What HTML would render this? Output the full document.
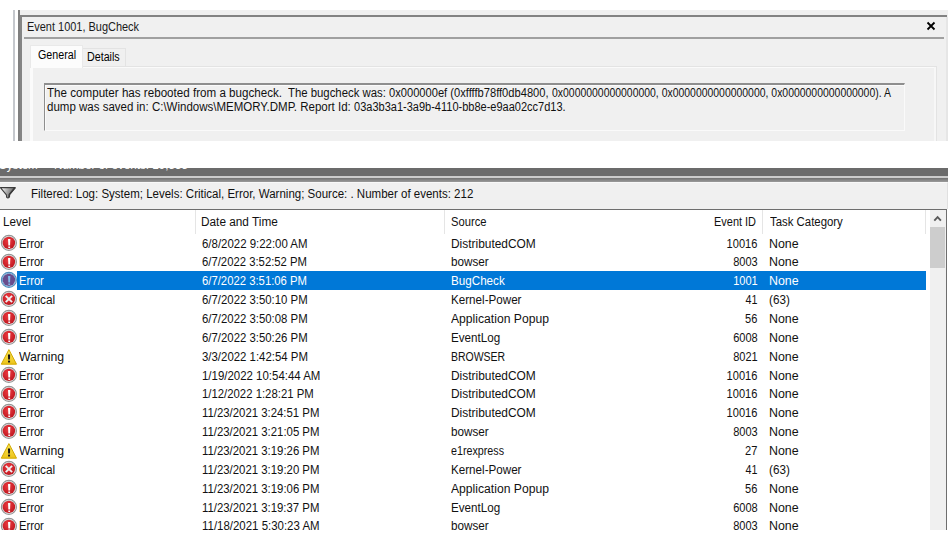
<!DOCTYPE html>
<html><head><meta charset="utf-8"><style>
*{margin:0;padding:0;box-sizing:border-box}
html,body{width:950px;height:550px;overflow:hidden;background:#fff;font-family:"Liberation Sans",sans-serif;font-size:12px;color:#000}
.a{position:absolute}
.t{position:absolute;white-space:pre}
#dlg{left:20px;top:10px;width:928px;height:131px;background:#f0f0f0}
#lgl{left:13px;top:10px;width:2px;height:131px;background:#c5c8cd}
#dgl{left:18px;top:10px;width:2px;height:131px;background:#7f7f7f}
#dgl2{left:20px;top:15px;width:2px;height:126px;background:#858585}
#tline{left:20px;top:15px;width:927px;height:2px;background:#838383}
#tline2{left:24px;top:37px;width:920px;height:1.5px;background:#a0a0a0}
#rline{left:946px;top:17px;width:2px;height:124px;background:#e6e6e6}
#close{left:926px;top:21px}
#tab1{left:29.5px;top:45px;width:53px;height:23px;background:#fcfcfc;border:1px solid #e9e9e9;border-bottom:none}
#tab2{left:82.5px;top:47.5px;width:43px;height:19px;background:#f0f0f0;border:1px solid #e3e3e3;border-left:none}
#panel{left:29.5px;top:66px;width:907.8px;height:75px;background:#f0f0f0;border-top:1px solid #e3e3e3;border-right:1.5px solid #e3e3e3}
#pl{left:29.5px;top:67px;width:3.2px;height:74px;background:#fbfbfb}
#pt{left:29.5px;top:67px;width:906.3px;height:1px;background:#fafafa}
#pr{left:934px;top:67px;width:1.8px;height:74px;background:#f7f7f7}
#tbox{left:44px;top:82.8px;width:861px;height:48px;background:#f0f0f0;border-top:2px solid #8e8e8e;border-left:1.8px solid #8e8e8e;border-right:1px solid #fafafa;border-bottom:1px solid #fafafa;box-shadow:inset 1px 1px 0 #fafafa}
#dbar{left:0;top:168px;width:948px;height:8px;background:#6b6b6b;overflow:hidden}
#st1{left:0;top:176px;width:948px;height:2px;background:#cbcbcb}
#st2{left:0;top:178px;width:948px;height:3.5px;background:linear-gradient(#727272,#9a9a9a)}
#fbar{left:0;top:181.5px;width:947.5px;height:27.5px;background:#f0f0f0;border-top:1px solid #f8f8f8;border-right:1px solid #e0e0e0}
#funnel{left:0;top:186px}
#tborder{left:0;top:209px;width:947px;height:1px;background:#6e6e6e}
#rborder{left:945.6px;top:209px;width:1.6px;height:321px;background:#6e6e6e}
#list{left:0;top:210px;width:945.6px;height:320px;background:#fff;overflow:hidden}
.vd{top:0;width:1px;height:23.5px;background:#e5e5e5}
.row{position:absolute;left:0;width:926px;height:18.857px}
.row .ic{position:absolute;left:0;top:0.5px}
.row .hl{position:absolute;left:17px;top:0;width:909px;height:100%}
.row.sel .hl{background:#0078d7}
#sb{left:930px;top:0;width:15.6px;height:320px;background:#f0f0f0}
#thumb{left:930px;top:16.6px;width:15px;height:41.6px;background:#cdcdcd}
</style></head><body>
<svg width="0" height="0" style="position:absolute"><defs><radialGradient id="rg" cx="0.45" cy="0.35" r="0.75"><stop offset="0" stop-color="#ee3a40"/><stop offset="1" stop-color="#b5121a"/></radialGradient><linearGradient id="yg" x1="0" y1="0" x2="0" y2="1"><stop offset="0" stop-color="#fbe95a"/><stop offset="1" stop-color="#ecc31a"/></linearGradient></defs></svg>
<div class="a" id="lgl"></div>
<div class="a" id="dlg"></div>
<div class="a" id="dgl"></div>
<div class="a" id="dgl2"></div>
<div class="a" id="tline"></div>
<div class="a" id="rline"></div>
<span class="t" style="left:26.96px;top:20.44px;font-size:13px;line-height:13px;transform:scaleX(0.8424);transform-origin:0 0;color:#1a1a1a;">Event 1001, BugCheck</span>
<svg class="a" id="close" width="10" height="10" viewBox="0 0 10 10"><path d="M1.5 1.5 L8.5 8.5 M8.5 1.5 L1.5 8.5" stroke="#000" stroke-width="1.8"/></svg>
<div class="a" id="tline2"></div>
<div class="a" id="panel"></div><div class="a" id="pl"></div><div class="a" id="pt"></div><div class="a" id="pr"></div>
<div class="a" id="tab2"></div>
<div class="a" id="tab1"></div>
<span class="t" style="left:37.60px;top:48.60px;font-size:12px;line-height:12px;transform:scaleX(0.8905);transform-origin:0 0;color:#000;">General</span>
<span class="t" style="left:87.11px;top:51.30px;font-size:12px;line-height:12px;transform:scaleX(0.8917);transform-origin:0 0;color:#000;">Details</span>
<div class="a" id="tbox"></div>
<span class="t" style="left:47.00px;top:86.50px;font-size:12px;line-height:12px;transform:scaleX(0.9682);transform-origin:0 0;color:#111;">The computer has rebooted from a bugcheck.</span><span class="t" style="left:287.90px;top:86.50px;font-size:12px;line-height:12px;transform:scaleX(0.9461);transform-origin:0 0;color:#111;">The bugcheck was:</span><span class="t" style="left:388.80px;top:86.50px;font-size:12px;line-height:12px;transform:scaleX(0.9281);transform-origin:0 0;color:#111;">0x000000ef (0xffffb78ff0db4800,</span><span class="t" style="left:551.60px;top:86.50px;font-size:12px;line-height:12px;transform:scaleX(0.8695);transform-origin:0 0;color:#111;">0x0000000000000000, 0x0000000000000000, 0x0000000000000000). A</span>
<span class="t" style="left:47.00px;top:100.80px;font-size:12px;line-height:12px;transform:scaleX(0.9589);transform-origin:0 0;color:#111;">dump was saved in: C:\Windows\MEMORY.DMP. Report Id:</span><span class="t" style="left:354.20px;top:100.80px;font-size:12px;line-height:12px;transform:scaleX(0.9178);transform-origin:0 0;color:#111;">03a3b3a1-3a9b-4110-bb8e-e9aa02cc7d13.</span>
<div class="a" id="dbar"><span class="t" style="left:-1.50px;top:-9.40px;font-size:12px;line-height:12px;transform:scaleX(0.9700);transform-origin:0 0;color:#fff;">System     Number of events: 19,535</span></div>
<div class="a" id="st1"></div>
<div class="a" id="st2"></div>
<div class="a" id="fbar"></div>
<svg class="a" id="funnel" width="17" height="15" viewBox="0 0 17 15"><defs><linearGradient id="fg" x1="0" x2="1" y1="0" y2="0.3"><stop offset="0.1" stop-color="#f4f4f4"/><stop offset="0.8" stop-color="#7a7a7a"/></linearGradient></defs><path d="M0.4 1.6 L15.2 1.6 L9.4 8.6 L9.2 11.2 Q7.9 12.6 6.6 11.2 L6.4 8.9 Z" fill="url(#fg)" stroke="#3c3c3c" stroke-width="1.05" stroke-linejoin="round"/><path d="M15.2 1.6 L9.4 8.6 L9.2 11.2" fill="none" stroke="#3a3a3a" stroke-width="1.6" stroke-linejoin="round"/></svg>
<span class="t" style="left:30.54px;top:187.60px;font-size:12px;line-height:12px;transform:scaleX(0.9593);transform-origin:0 0;color:#111;">Filtered: Log: System; Levels: Critical, Error, Warning; Source: . Number of events: 212</span>
<div class="a" id="tborder"></div>
<div class="a" id="list">
<div class="a vd" style="left:195px"></div>
<div class="a vd" style="left:444px"></div>
<div class="a vd" style="left:762px"></div>
<div class="a vd" style="left:925px"></div>
<div class="a" style="left:0;top:-210px;width:950px;height:550px"><span class="t" style="left:2.73px;top:215.60px;font-size:12px;line-height:12px;transform:scaleX(0.9741);transform-origin:0 0;color:#111;">Level</span><span class="t" style="left:201.22px;top:215.60px;font-size:12px;line-height:12px;transform:scaleX(0.9844);transform-origin:0 0;color:#111;">Date and Time</span><span class="t" style="left:450.57px;top:215.60px;font-size:12px;line-height:12px;transform:scaleX(0.9324);transform-origin:0 0;color:#111;">Source</span><span class="t" style="left:713.99px;top:215.60px;font-size:12px;line-height:12px;transform:scaleX(0.9133);transform-origin:0 0;color:#111;">Event ID</span><span class="t" style="left:769.50px;top:215.60px;font-size:12px;line-height:12px;transform:scaleX(0.9494);transform-origin:0 0;color:#111;">Task Category</span></div>
<div class="a" style="left:0;top:23.200px;width:926px;height:330px">
<div class="row" style="top:0.000px"><svg class="ic" width="18" height="18" viewBox="0 0 18 18"><circle cx="8.9" cy="8.9" r="7.45" fill="none" stroke="#939393" stroke-width="1.2"/><circle cx="8.9" cy="8.9" r="6.55" fill="none" stroke="#c9c9c9" stroke-width="0.9"/><circle cx="8.9" cy="8.9" r="6.2" fill="url(#rg)"/><path d="M8.05 4.9 H10.35 L10.05 11.5 H8.35 Z" fill="#fff"/><rect x="8.3" y="12.5" width="1.8" height="1.5" fill="#fff"/></svg><div class="hl"></div><span class="t" style="left:19.20px;top:4.40px;font-size:12px;line-height:12px;transform:scaleX(0.9308);transform-origin:0 0;color:#111;">Error</span><span class="t" style="left:202.20px;top:4.40px;font-size:12px;line-height:12px;transform:scaleX(0.9527);transform-origin:0 0;color:#111;">6/8/2022 9:22:00 AM</span><span class="t" style="left:451.00px;top:4.40px;font-size:12px;line-height:12px;transform:scaleX(0.9929);transform-origin:0 0;color:#111;">DistributedCOM</span><span class="t" style="right:168.40px;top:4.40px;font-size:12px;line-height:12px;transform:scaleX(0.9219);transform-origin:100% 0;color:#111;">10016</span><span class="t" style="left:769.00px;top:4.40px;font-size:12px;line-height:12px;transform:scaleX(1.0333);transform-origin:0 0;color:#111;">None</span></div><div class="row" style="top:18.857px"><svg class="ic" width="18" height="18" viewBox="0 0 18 18"><circle cx="8.9" cy="8.9" r="7.45" fill="none" stroke="#939393" stroke-width="1.2"/><circle cx="8.9" cy="8.9" r="6.55" fill="none" stroke="#c9c9c9" stroke-width="0.9"/><circle cx="8.9" cy="8.9" r="6.2" fill="url(#rg)"/><path d="M8.05 4.9 H10.35 L10.05 11.5 H8.35 Z" fill="#fff"/><rect x="8.3" y="12.5" width="1.8" height="1.5" fill="#fff"/></svg><div class="hl"></div><span class="t" style="left:19.20px;top:4.40px;font-size:12px;line-height:12px;transform:scaleX(0.9308);transform-origin:0 0;color:#111;">Error</span><span class="t" style="left:202.20px;top:4.40px;font-size:12px;line-height:12px;transform:scaleX(0.9423);transform-origin:0 0;color:#111;">6/7/2022 3:52:52 PM</span><span class="t" style="left:451.00px;top:4.40px;font-size:12px;line-height:12px;transform:scaleX(0.9763);transform-origin:0 0;color:#111;">bowser</span><span class="t" style="right:168.40px;top:4.40px;font-size:12px;line-height:12px;transform:scaleX(0.9200);transform-origin:100% 0;color:#111;">8003</span><span class="t" style="left:769.00px;top:4.40px;font-size:12px;line-height:12px;transform:scaleX(1.0333);transform-origin:0 0;color:#111;">None</span></div><div class="row sel" style="top:37.714px"><svg class="ic" width="18" height="18" viewBox="0 0 18 18"><circle cx="8.9" cy="8.9" r="7.5" fill="none" stroke="#508cbb" stroke-width="1.1"/><circle cx="8.9" cy="8.9" r="6.6" fill="none" stroke="#68a4d3" stroke-width="0.9"/><circle cx="8.9" cy="8.9" r="6.2" fill="#684c8c"/><path d="M8.05 4.9 H10.35 L10.05 11.5 H8.35 Z" fill="#80bbeb"/><rect x="8.3" y="12.5" width="1.8" height="1.5" fill="#80bbeb"/></svg><div class="hl"></div><span class="t" style="left:19.20px;top:4.40px;font-size:12px;line-height:12px;transform:scaleX(0.9308);transform-origin:0 0;color:#fff;">Error</span><span class="t" style="left:202.20px;top:4.40px;font-size:12px;line-height:12px;transform:scaleX(0.9423);transform-origin:0 0;color:#fff;">6/7/2022 3:51:06 PM</span><span class="t" style="left:451.00px;top:4.40px;font-size:12px;line-height:12px;transform:scaleX(0.9704);transform-origin:0 0;color:#fff;">BugCheck</span><span class="t" style="right:168.40px;top:4.40px;font-size:12px;line-height:12px;transform:scaleX(0.9200);transform-origin:100% 0;color:#fff;">1001</span><span class="t" style="left:769.00px;top:4.40px;font-size:12px;line-height:12px;transform:scaleX(1.0333);transform-origin:0 0;color:#fff;">None</span></div><div class="row" style="top:56.571px"><svg class="ic" width="18" height="18" viewBox="0 0 18 18"><circle cx="8.9" cy="8.9" r="7.45" fill="none" stroke="#939393" stroke-width="1.2"/><circle cx="8.9" cy="8.9" r="6.55" fill="none" stroke="#c9c9c9" stroke-width="0.9"/><circle cx="8.9" cy="8.9" r="6.2" fill="url(#rg)"/><path d="M5.7 5.8 L12.1 12.2 M12.1 5.8 L5.7 12.2" stroke="#f0f0f0" stroke-width="1.9"/></svg><div class="hl"></div><span class="t" style="left:19.20px;top:4.40px;font-size:12px;line-height:12px;transform:scaleX(0.9861);transform-origin:0 0;color:#111;">Critical</span><span class="t" style="left:202.20px;top:4.40px;font-size:12px;line-height:12px;transform:scaleX(0.9480);transform-origin:0 0;color:#111;">6/7/2022 3:50:10 PM</span><span class="t" style="left:451.00px;top:4.40px;font-size:12px;line-height:12px;transform:scaleX(0.9694);transform-origin:0 0;color:#111;">Kernel-Power</span><span class="t" style="right:168.40px;top:4.40px;font-size:12px;line-height:12px;transform:scaleX(0.8923);transform-origin:100% 0;color:#111;">41</span><span class="t" style="left:769.00px;top:4.40px;font-size:12px;line-height:12px;transform:scaleX(0.9750);transform-origin:0 0;color:#111;">(63)</span></div><div class="row" style="top:75.428px"><svg class="ic" width="18" height="18" viewBox="0 0 18 18"><circle cx="8.9" cy="8.9" r="7.45" fill="none" stroke="#939393" stroke-width="1.2"/><circle cx="8.9" cy="8.9" r="6.55" fill="none" stroke="#c9c9c9" stroke-width="0.9"/><circle cx="8.9" cy="8.9" r="6.2" fill="url(#rg)"/><path d="M8.05 4.9 H10.35 L10.05 11.5 H8.35 Z" fill="#fff"/><rect x="8.3" y="12.5" width="1.8" height="1.5" fill="#fff"/></svg><div class="hl"></div><span class="t" style="left:19.20px;top:4.40px;font-size:12px;line-height:12px;transform:scaleX(0.9308);transform-origin:0 0;color:#111;">Error</span><span class="t" style="left:202.20px;top:4.40px;font-size:12px;line-height:12px;transform:scaleX(0.9480);transform-origin:0 0;color:#111;">6/7/2022 3:50:08 PM</span><span class="t" style="left:451.00px;top:4.40px;font-size:12px;line-height:12px;transform:scaleX(1.0125);transform-origin:0 0;color:#111;">Application Popup</span><span class="t" style="right:168.40px;top:4.40px;font-size:12px;line-height:12px;transform:scaleX(0.9200);transform-origin:100% 0;color:#111;">56</span><span class="t" style="left:769.00px;top:4.40px;font-size:12px;line-height:12px;transform:scaleX(1.0333);transform-origin:0 0;color:#111;">None</span></div><div class="row" style="top:94.285px"><svg class="ic" width="18" height="18" viewBox="0 0 18 18"><circle cx="8.9" cy="8.9" r="7.45" fill="none" stroke="#939393" stroke-width="1.2"/><circle cx="8.9" cy="8.9" r="6.55" fill="none" stroke="#c9c9c9" stroke-width="0.9"/><circle cx="8.9" cy="8.9" r="6.2" fill="url(#rg)"/><path d="M8.05 4.9 H10.35 L10.05 11.5 H8.35 Z" fill="#fff"/><rect x="8.3" y="12.5" width="1.8" height="1.5" fill="#fff"/></svg><div class="hl"></div><span class="t" style="left:19.20px;top:4.40px;font-size:12px;line-height:12px;transform:scaleX(0.9308);transform-origin:0 0;color:#111;">Error</span><span class="t" style="left:202.20px;top:4.40px;font-size:12px;line-height:12px;transform:scaleX(0.9480);transform-origin:0 0;color:#111;">6/7/2022 3:50:26 PM</span><span class="t" style="left:451.00px;top:4.40px;font-size:12px;line-height:12px;transform:scaleX(0.9694);transform-origin:0 0;color:#111;">EventLog</span><span class="t" style="right:168.40px;top:4.40px;font-size:12px;line-height:12px;transform:scaleX(0.9200);transform-origin:100% 0;color:#111;">6008</span><span class="t" style="left:769.00px;top:4.40px;font-size:12px;line-height:12px;transform:scaleX(1.0333);transform-origin:0 0;color:#111;">None</span></div><div class="row" style="top:113.142px"><svg class="ic" width="18" height="18" viewBox="0 0 18 18"><path d="M8.9 2.6 L16.5 17.2 L1.3 17.2 Z" fill="url(#yg)" stroke="#d2a800" stroke-width="1" stroke-linejoin="round"/><path d="M7.95 7.4 H10.15 L9.95 12.4 H8.15 Z" fill="#161616"/><rect x="8.05" y="13.6" width="2" height="1.9" fill="#161616"/></svg><div class="hl"></div><span class="t" style="left:19.20px;top:4.40px;font-size:12px;line-height:12px;transform:scaleX(1.0182);transform-origin:0 0;color:#111;">Warning</span><span class="t" style="left:202.20px;top:4.40px;font-size:12px;line-height:12px;transform:scaleX(0.9509);transform-origin:0 0;color:#111;">3/3/2022 1:42:54 PM</span><span class="t" style="left:451.00px;top:4.40px;font-size:12px;line-height:12px;transform:scaleX(0.8733);transform-origin:0 0;color:#111;">BROWSER</span><span class="t" style="right:168.40px;top:4.40px;font-size:12px;line-height:12px;transform:scaleX(0.9200);transform-origin:100% 0;color:#111;">8021</span><span class="t" style="left:769.00px;top:4.40px;font-size:12px;line-height:12px;transform:scaleX(1.0333);transform-origin:0 0;color:#111;">None</span></div><div class="row" style="top:131.999px"><svg class="ic" width="18" height="18" viewBox="0 0 18 18"><circle cx="8.9" cy="8.9" r="7.45" fill="none" stroke="#939393" stroke-width="1.2"/><circle cx="8.9" cy="8.9" r="6.55" fill="none" stroke="#c9c9c9" stroke-width="0.9"/><circle cx="8.9" cy="8.9" r="6.2" fill="url(#rg)"/><path d="M8.05 4.9 H10.35 L10.05 11.5 H8.35 Z" fill="#fff"/><rect x="8.3" y="12.5" width="1.8" height="1.5" fill="#fff"/></svg><div class="hl"></div><span class="t" style="left:19.20px;top:4.40px;font-size:12px;line-height:12px;transform:scaleX(0.9308);transform-origin:0 0;color:#111;">Error</span><span class="t" style="left:202.20px;top:4.40px;font-size:12px;line-height:12px;transform:scaleX(0.9541);transform-origin:0 0;color:#111;">1/19/2022 10:54:44 AM</span><span class="t" style="left:451.00px;top:4.40px;font-size:12px;line-height:12px;transform:scaleX(0.9929);transform-origin:0 0;color:#111;">DistributedCOM</span><span class="t" style="right:168.40px;top:4.40px;font-size:12px;line-height:12px;transform:scaleX(0.9219);transform-origin:100% 0;color:#111;">10016</span><span class="t" style="left:769.00px;top:4.40px;font-size:12px;line-height:12px;transform:scaleX(1.0333);transform-origin:0 0;color:#111;">None</span></div><div class="row" style="top:150.856px"><svg class="ic" width="18" height="18" viewBox="0 0 18 18"><circle cx="8.9" cy="8.9" r="7.45" fill="none" stroke="#939393" stroke-width="1.2"/><circle cx="8.9" cy="8.9" r="6.55" fill="none" stroke="#c9c9c9" stroke-width="0.9"/><circle cx="8.9" cy="8.9" r="6.2" fill="url(#rg)"/><path d="M8.05 4.9 H10.35 L10.05 11.5 H8.35 Z" fill="#fff"/><rect x="8.3" y="12.5" width="1.8" height="1.5" fill="#fff"/></svg><div class="hl"></div><span class="t" style="left:19.20px;top:4.40px;font-size:12px;line-height:12px;transform:scaleX(0.9308);transform-origin:0 0;color:#111;">Error</span><span class="t" style="left:202.20px;top:4.40px;font-size:12px;line-height:12px;transform:scaleX(0.9457);transform-origin:0 0;color:#111;">1/12/2022 1:28:21 PM</span><span class="t" style="left:451.00px;top:4.40px;font-size:12px;line-height:12px;transform:scaleX(0.9929);transform-origin:0 0;color:#111;">DistributedCOM</span><span class="t" style="right:168.40px;top:4.40px;font-size:12px;line-height:12px;transform:scaleX(0.9219);transform-origin:100% 0;color:#111;">10016</span><span class="t" style="left:769.00px;top:4.40px;font-size:12px;line-height:12px;transform:scaleX(1.0333);transform-origin:0 0;color:#111;">None</span></div><div class="row" style="top:169.713px"><svg class="ic" width="18" height="18" viewBox="0 0 18 18"><circle cx="8.9" cy="8.9" r="7.45" fill="none" stroke="#939393" stroke-width="1.2"/><circle cx="8.9" cy="8.9" r="6.55" fill="none" stroke="#c9c9c9" stroke-width="0.9"/><circle cx="8.9" cy="8.9" r="6.2" fill="url(#rg)"/><path d="M8.05 4.9 H10.35 L10.05 11.5 H8.35 Z" fill="#fff"/><rect x="8.3" y="12.5" width="1.8" height="1.5" fill="#fff"/></svg><div class="hl"></div><span class="t" style="left:19.20px;top:4.40px;font-size:12px;line-height:12px;transform:scaleX(0.9308);transform-origin:0 0;color:#111;">Error</span><span class="t" style="left:202.20px;top:4.40px;font-size:12px;line-height:12px;transform:scaleX(0.9475);transform-origin:0 0;color:#111;">11/23/2021 3:24:51 PM</span><span class="t" style="left:451.00px;top:4.40px;font-size:12px;line-height:12px;transform:scaleX(0.9929);transform-origin:0 0;color:#111;">DistributedCOM</span><span class="t" style="right:168.40px;top:4.40px;font-size:12px;line-height:12px;transform:scaleX(0.9219);transform-origin:100% 0;color:#111;">10016</span><span class="t" style="left:769.00px;top:4.40px;font-size:12px;line-height:12px;transform:scaleX(1.0333);transform-origin:0 0;color:#111;">None</span></div><div class="row" style="top:188.570px"><svg class="ic" width="18" height="18" viewBox="0 0 18 18"><circle cx="8.9" cy="8.9" r="7.45" fill="none" stroke="#939393" stroke-width="1.2"/><circle cx="8.9" cy="8.9" r="6.55" fill="none" stroke="#c9c9c9" stroke-width="0.9"/><circle cx="8.9" cy="8.9" r="6.2" fill="url(#rg)"/><path d="M8.05 4.9 H10.35 L10.05 11.5 H8.35 Z" fill="#fff"/><rect x="8.3" y="12.5" width="1.8" height="1.5" fill="#fff"/></svg><div class="hl"></div><span class="t" style="left:19.20px;top:4.40px;font-size:12px;line-height:12px;transform:scaleX(0.9308);transform-origin:0 0;color:#111;">Error</span><span class="t" style="left:202.20px;top:4.40px;font-size:12px;line-height:12px;transform:scaleX(0.9480);transform-origin:0 0;color:#111;">11/23/2021 3:21:05 PM</span><span class="t" style="left:451.00px;top:4.40px;font-size:12px;line-height:12px;transform:scaleX(0.9763);transform-origin:0 0;color:#111;">bowser</span><span class="t" style="right:168.40px;top:4.40px;font-size:12px;line-height:12px;transform:scaleX(0.9200);transform-origin:100% 0;color:#111;">8003</span><span class="t" style="left:769.00px;top:4.40px;font-size:12px;line-height:12px;transform:scaleX(1.0333);transform-origin:0 0;color:#111;">None</span></div><div class="row" style="top:207.427px"><svg class="ic" width="18" height="18" viewBox="0 0 18 18"><path d="M8.9 2.6 L16.5 17.2 L1.3 17.2 Z" fill="url(#yg)" stroke="#d2a800" stroke-width="1" stroke-linejoin="round"/><path d="M7.95 7.4 H10.15 L9.95 12.4 H8.15 Z" fill="#161616"/><rect x="8.05" y="13.6" width="2" height="1.9" fill="#161616"/></svg><div class="hl"></div><span class="t" style="left:19.20px;top:4.40px;font-size:12px;line-height:12px;transform:scaleX(1.0182);transform-origin:0 0;color:#111;">Warning</span><span class="t" style="left:202.20px;top:4.40px;font-size:12px;line-height:12px;transform:scaleX(0.9480);transform-origin:0 0;color:#111;">11/23/2021 3:19:26 PM</span><span class="t" style="left:451.00px;top:4.40px;font-size:12px;line-height:12px;transform:scaleX(0.8932);transform-origin:0 0;color:#111;">e1rexpress</span><span class="t" style="right:168.40px;top:4.40px;font-size:12px;line-height:12px;transform:scaleX(0.9200);transform-origin:100% 0;color:#111;">27</span><span class="t" style="left:769.00px;top:4.40px;font-size:12px;line-height:12px;transform:scaleX(1.0333);transform-origin:0 0;color:#111;">None</span></div><div class="row" style="top:226.284px"><svg class="ic" width="18" height="18" viewBox="0 0 18 18"><circle cx="8.9" cy="8.9" r="7.45" fill="none" stroke="#939393" stroke-width="1.2"/><circle cx="8.9" cy="8.9" r="6.55" fill="none" stroke="#c9c9c9" stroke-width="0.9"/><circle cx="8.9" cy="8.9" r="6.2" fill="url(#rg)"/><path d="M5.7 5.8 L12.1 12.2 M12.1 5.8 L5.7 12.2" stroke="#f0f0f0" stroke-width="1.9"/></svg><div class="hl"></div><span class="t" style="left:19.20px;top:4.40px;font-size:12px;line-height:12px;transform:scaleX(0.9861);transform-origin:0 0;color:#111;">Critical</span><span class="t" style="left:202.20px;top:4.40px;font-size:12px;line-height:12px;transform:scaleX(0.9480);transform-origin:0 0;color:#111;">11/23/2021 3:19:20 PM</span><span class="t" style="left:451.00px;top:4.40px;font-size:12px;line-height:12px;transform:scaleX(0.9694);transform-origin:0 0;color:#111;">Kernel-Power</span><span class="t" style="right:168.40px;top:4.40px;font-size:12px;line-height:12px;transform:scaleX(0.8923);transform-origin:100% 0;color:#111;">41</span><span class="t" style="left:769.00px;top:4.40px;font-size:12px;line-height:12px;transform:scaleX(0.9750);transform-origin:0 0;color:#111;">(63)</span></div><div class="row" style="top:245.141px"><svg class="ic" width="18" height="18" viewBox="0 0 18 18"><circle cx="8.9" cy="8.9" r="7.45" fill="none" stroke="#939393" stroke-width="1.2"/><circle cx="8.9" cy="8.9" r="6.55" fill="none" stroke="#c9c9c9" stroke-width="0.9"/><circle cx="8.9" cy="8.9" r="6.2" fill="url(#rg)"/><path d="M8.05 4.9 H10.35 L10.05 11.5 H8.35 Z" fill="#fff"/><rect x="8.3" y="12.5" width="1.8" height="1.5" fill="#fff"/></svg><div class="hl"></div><span class="t" style="left:19.20px;top:4.40px;font-size:12px;line-height:12px;transform:scaleX(0.9308);transform-origin:0 0;color:#111;">Error</span><span class="t" style="left:202.20px;top:4.40px;font-size:12px;line-height:12px;transform:scaleX(0.9480);transform-origin:0 0;color:#111;">11/23/2021 3:19:06 PM</span><span class="t" style="left:451.00px;top:4.40px;font-size:12px;line-height:12px;transform:scaleX(1.0125);transform-origin:0 0;color:#111;">Application Popup</span><span class="t" style="right:168.40px;top:4.40px;font-size:12px;line-height:12px;transform:scaleX(0.9200);transform-origin:100% 0;color:#111;">56</span><span class="t" style="left:769.00px;top:4.40px;font-size:12px;line-height:12px;transform:scaleX(1.0333);transform-origin:0 0;color:#111;">None</span></div><div class="row" style="top:263.998px"><svg class="ic" width="18" height="18" viewBox="0 0 18 18"><circle cx="8.9" cy="8.9" r="7.45" fill="none" stroke="#939393" stroke-width="1.2"/><circle cx="8.9" cy="8.9" r="6.55" fill="none" stroke="#c9c9c9" stroke-width="0.9"/><circle cx="8.9" cy="8.9" r="6.2" fill="url(#rg)"/><path d="M8.05 4.9 H10.35 L10.05 11.5 H8.35 Z" fill="#fff"/><rect x="8.3" y="12.5" width="1.8" height="1.5" fill="#fff"/></svg><div class="hl"></div><span class="t" style="left:19.20px;top:4.40px;font-size:12px;line-height:12px;transform:scaleX(0.9308);transform-origin:0 0;color:#111;">Error</span><span class="t" style="left:202.20px;top:4.40px;font-size:12px;line-height:12px;transform:scaleX(0.9475);transform-origin:0 0;color:#111;">11/23/2021 3:19:37 PM</span><span class="t" style="left:451.00px;top:4.40px;font-size:12px;line-height:12px;transform:scaleX(0.9694);transform-origin:0 0;color:#111;">EventLog</span><span class="t" style="right:168.40px;top:4.40px;font-size:12px;line-height:12px;transform:scaleX(0.9200);transform-origin:100% 0;color:#111;">6008</span><span class="t" style="left:769.00px;top:4.40px;font-size:12px;line-height:12px;transform:scaleX(1.0333);transform-origin:0 0;color:#111;">None</span></div><div class="row" style="top:282.855px"><svg class="ic" width="18" height="18" viewBox="0 0 18 18"><circle cx="8.9" cy="8.9" r="7.45" fill="none" stroke="#939393" stroke-width="1.2"/><circle cx="8.9" cy="8.9" r="6.55" fill="none" stroke="#c9c9c9" stroke-width="0.9"/><circle cx="8.9" cy="8.9" r="6.2" fill="url(#rg)"/><path d="M8.05 4.9 H10.35 L10.05 11.5 H8.35 Z" fill="#fff"/><rect x="8.3" y="12.5" width="1.8" height="1.5" fill="#fff"/></svg><div class="hl"></div><span class="t" style="left:19.20px;top:4.40px;font-size:12px;line-height:12px;transform:scaleX(0.9308);transform-origin:0 0;color:#111;">Error</span><span class="t" style="left:202.20px;top:4.40px;font-size:12px;line-height:12px;transform:scaleX(0.9541);transform-origin:0 0;color:#111;">11/18/2021 5:30:23 AM</span><span class="t" style="left:451.00px;top:4.40px;font-size:12px;line-height:12px;transform:scaleX(0.9763);transform-origin:0 0;color:#111;">bowser</span><span class="t" style="right:168.40px;top:4.40px;font-size:12px;line-height:12px;transform:scaleX(0.9200);transform-origin:100% 0;color:#111;">8003</span><span class="t" style="left:769.00px;top:4.40px;font-size:12px;line-height:12px;transform:scaleX(1.0333);transform-origin:0 0;color:#111;">None</span></div>
</div>
<div class="a" id="sb"></div>
<div class="a" id="thumb"></div>
<svg class="a" style="left:933px;top:5px" width="9" height="7" viewBox="0 0 9 7"><path d="M1.3 5.6 L4.6 2.2 L7.9 5.6" fill="none" stroke="#5a5a5a" stroke-width="1.9"/></svg>
</div>
<div class="a" id="rborder"></div>
</body></html>
